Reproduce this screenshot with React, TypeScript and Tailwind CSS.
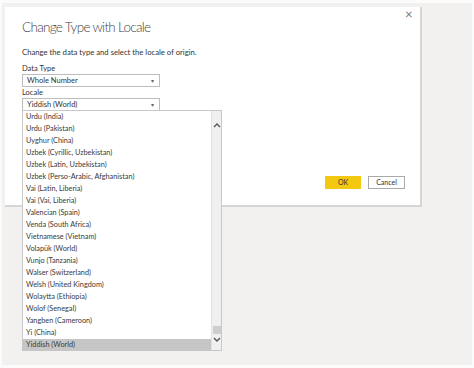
import React from "react";

const items = [
  "Urdu (India)",
  "Urdu (Pakistan)",
  "Uyghur (China)",
  "Uzbek (Cyrillic, Uzbekistan)",
  "Uzbek (Latin, Uzbekistan)",
  "Uzbek (Perso-Arabic, Afghanistan)",
  "Vai (Latin, Liberia)",
  "Vai (Vai, Liberia)",
  "Valencian (Spain)",
  "Venda (South Africa)",
  "Vietnamese (Vietnam)",
  "Volapük (World)",
  "Vunjo (Tanzania)",
  "Walser (Switzerland)",
  "Welsh (United Kingdom)",
  "Wolaytta (Ethiopia)",
  "Wolof (Senegal)",
  "Yangben (Cameroon)",
  "Yi (China)",
  "Yiddish (World)",
];

function Caret() {
  return <span className="text-[6px] leading-none text-[#666] mr-[5px]">▾</span>;
}

export default function App() {
  return (
    <div
      className="w-[474px] h-[368px] bg-[#fbfbfb] pt-[3px] pl-[2px]"
      style={{ fontFamily: 'Lato, "Noto Sans", sans-serif' }}
    >
      <div className="relative w-[470px] h-[362px] bg-[#f2f1f0]">
        <div className="absolute left-[3px] top-[4px] w-[417px] h-[200px] bg-white border-r-2 border-b-2 border-[#d6d6d6]">
          <div className="absolute left-[400px] top-[1px] text-[13px] leading-none text-[#777]">×</div>
          <div className="pl-[17px] pt-[12px]">
            <div className="text-[13.5px] tracking-[-0.7px] font-light leading-[17px] text-[#444]">Change Type with Locale</div>
            <div className="mt-[11px] text-[7.7px] leading-[10px] text-[#333]">
              Change the data type and select the locale of origin.
            </div>
            <div className="mt-[7px] text-[7.5px] leading-[9px] text-[#333]">Data Type</div>
            <div className="mt-[1px] w-[138px] h-[13px] border border-[#bdbdbd] flex items-center justify-between pl-[4px] text-[7.5px] text-[#333]">
              <span>Whole Number</span>
              <Caret />
            </div>
            <div className="mt-[1px] text-[7.5px] leading-[9px] text-[#333]">Locale</div>
            <div className="mt-[1px] w-[138px] h-[13px] border border-[#bdbdbd] flex items-center justify-between pl-[4px] text-[7.5px] text-[#333]">
              <span>Yiddish (World)</span>
              <Caret />
            </div>
          </div>
          <div className="absolute left-[320px] top-[169px] flex gap-[7px]">
            <div className="w-[36px] h-[13px] bg-[#f2c811] flex items-center justify-center text-[7px] text-[#333]">OK</div>
            <div className="w-[37px] h-[13px] bg-white border border-[#a9a9a9] flex items-center justify-center text-[7px] text-[#333]">Cancel</div>
          </div>
        </div>
        <div className="absolute left-[20px] top-[107px] w-[200px] h-[241px] bg-white border border-[#c8c8c8] flex">
          <div className="flex-1 flex flex-col">
            {items.map((it, i) => (
              <div
                key={it}
                className={`h-[12px] leading-[12px] pl-[3px] text-[7.3px] text-[#3a3a3a] ${i === items.length - 1 ? "bg-[#c6c6c6]" : ""}`}
              >
                {it}
              </div>
            ))}
          </div>
          <div className="w-[10px] bg-[#f0f0f0] border-l border-[#e2e2e2] flex flex-col items-center">
            <svg width="8" height="6" viewBox="0 0 8 6" className="mt-[11px]">
              <path d="M1 5 L4 2 L7 5" stroke="#555" strokeWidth="1.4" fill="none" />
            </svg>
            <div className="flex-1" />
            <div className="w-[8px] h-[8px] bg-[#cdcdcd] mb-[3px]" />
            <svg width="8" height="6" viewBox="0 0 8 6" className="mb-[7px]">
              <path d="M1 1 L4 4 L7 1" stroke="#555" strokeWidth="1.4" fill="none" />
            </svg>
          </div>
        </div>
      </div>
    </div>
  );
}
